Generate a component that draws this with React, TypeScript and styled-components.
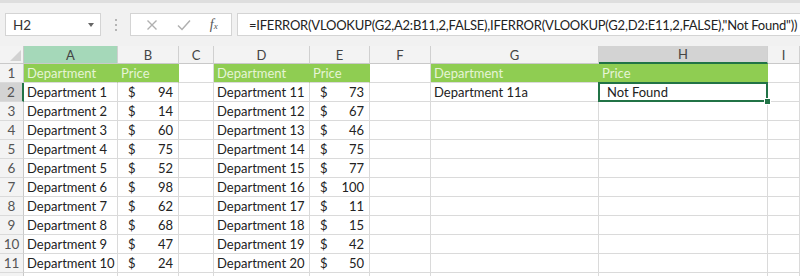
import React from 'react';
import styled, {createGlobalStyle} from 'styled-components';

const GlobalStyle = createGlobalStyle`
  html, body {
    margin: 0;
    padding: 0;
    background: #ffffff;
    font-family: Lato, "Open Sans", sans-serif;
    overflow: hidden;
  }
`;

const Window = styled.div`
  display: flex;
  flex-direction: column;
  width: 800px;
  height: 276px;
  overflow: hidden;
`;

const FormulaBar = styled.div`
  flex-shrink: 0;
  display: flex;
  align-items: center;
  height: 43px;
  padding-left: 5px;
  border-top: 3px solid #dedede;
  background: #f1f1f1;
`;

const NameBox = styled.div`
  display: flex;
  align-items: center;
  justify-content: space-between;
  box-sizing: border-box;
  width: 96px;
  height: 23px;
  padding: 0 6px 0 7px;
  background: #fff;
  border: 1px solid #d4d4d4;
  font-size: 13.5px;
  color: #333;
`;

const Caret = styled.span`
  width: 0;
  height: 0;
  border-left: 3.5px solid transparent;
  border-right: 3.5px solid transparent;
  border-top: 4px solid #666;
`;

const Grip = styled.div`
  display: flex;
  flex-direction: column;
  align-items: center;
  justify-content: center;
  gap: 3px;
  width: 29px;
  & span {
    width: 2px;
    height: 2px;
    background: #b5b5b5;
  }
`;

const FxButtons = styled.div`
  display: flex;
  align-items: center;
  justify-content: space-around;
  box-sizing: border-box;
  width: 102px;
  height: 23px;
  padding: 0 4px 0 6px;
  background: #fff;
  border: 1px solid #d4d4d4;
`;

const FxLabel = styled.span`
  font-family: "Liberation Serif", serif;
  font-style: italic;
  font-size: 14px;
  color: #555;
  & sub {
    font-size: 9px;
    vertical-align: 0;
  }
`;

const FormulaInput = styled.div`
  flex: 1;
  box-sizing: border-box;
  height: 23px;
  margin-left: 5px;
  padding-left: 11px;
  display: flex;
  align-items: center;
  background: #fff;
  border: 1px solid #d4d4d4;
  border-right: none;
  font-size: 13px;
  letter-spacing: -0.22px;
  color: #222;
  white-space: nowrap;
  overflow: hidden;
`;

const Sheet = styled.div`
  flex-shrink: 0;
  display: grid;
  grid-template-columns: 24px 94px 61px 35px 96px 60px 61px 168px 169px 1fr;
  grid-template-rows: 18px repeat(12, 19px);
  font-size: 13px;
  color: #222;
`;

type HeadProps = {
    $state?: 'hover' | 'active';
}

const Corner = styled.div`
  position: relative;
  background: #f3f3f3;
  border-right: 1px solid #c9c9c9;
  border-bottom: 1px solid #c9c9c9;
  &::after {
    content: '';
    position: absolute;
    right: 2px;
    bottom: 2px;
    border-left: 11px solid transparent;
    border-bottom: 11px solid #d2d2d2;
  }
`;

const ColHead = styled.div<HeadProps>`
  display: flex;
  align-items: center;
  justify-content: center;
  box-sizing: border-box;
  font-size: 13px;
  color: #444;
  background: ${p => p.$state === 'hover' ? '#a5d8b9' : p.$state === 'active' ? '#d3d3d3' : '#f3f3f3'};
  border-right: 1px solid #d0d0d0;
  border-bottom: ${p => p.$state === 'active' ? '2px solid #217346' : '1px solid #c9c9c9'};
`;

const RowHead = styled.div<HeadProps>`
  display: flex;
  align-items: flex-end;
  justify-content: center;
  box-sizing: border-box;
  padding-bottom: 1px;
  font-size: 13.5px;
  color: #555;
  background: ${p => p.$state === 'active' ? '#d3d3d3' : '#f3f3f3'};
  border-right: ${p => p.$state === 'active' ? '2px solid #217346' : '1px solid #c9c9c9'};
  border-bottom: 1px solid #dadada;
`;

type CellProps = {
    $head?: boolean;
    $money?: boolean;
    $selected?: boolean;
}

const Cell = styled.div<CellProps>`
  position: relative;
  display: flex;
  align-items: flex-end;
  justify-content: ${p => p.$money ? 'space-between' : 'flex-start'};
  box-sizing: border-box;
  padding: ${p => p.$money ? '0 5px 1px 10px' : p.$selected ? '0 0 1px 8px' : '0 0 1px 3px'};
  white-space: nowrap;
  background: ${p => p.$head ? '#8fcd52' : '#fff'};
  color: ${p => p.$head ? '#e6f4d6' : '#222'};
  border-right: 1px solid ${p => p.$head ? '#8fcd52' : '#dadada'};
  border-bottom: 1px solid #dadada;
  ${p => p.$selected && `
    &::after {
      content: '';
      position: absolute;
      inset: -1px -1px -1px -1px;
      border: 2px solid #217346;
      pointer-events: none;
    }
    &::before {
      content: '';
      position: absolute;
      right: -4px;
      bottom: -4px;
      width: 5px;
      height: 5px;
      background: #217346;
      border: 1px solid #fff;
      z-index: 2;
    }
  `}
`;

const columns: {name: string; state?: 'hover' | 'active'}[] = [
    {name: 'A', state: 'hover'}, {name: 'B'}, {name: 'C'}, {name: 'D'}, {name: 'E'},
    {name: 'F'}, {name: 'G'}, {name: 'H', state: 'active'}, {name: 'I'},
];

const first = [94, 14, 60, 75, 52, 98, 62, 68, 47, 24];
const second = [73, 67, 46, 75, 77, 100, 11, 15, 42, 50];

const formula = '=IFERROR(VLOOKUP(G2,A2:B11,2,FALSE),IFERROR(VLOOKUP(G2,D2:E11,2,FALSE),"Not Found"))';

const Money: React.FC<{value: number}> = ({value}) => (
    <Cell $money><span>$</span><span>{value}</span></Cell>
);

const App: React.FC = () => {
    const renderRow = (i: number) => {
        const row = i + 1;
        if (row === 1) {
            return (
                <React.Fragment key={row}>
                    <RowHead>1</RowHead>
                    <Cell $head>Department</Cell>
                    <Cell $head>Price</Cell>
                    <Cell/>
                    <Cell $head>Department</Cell>
                    <Cell $head>Price</Cell>
                    <Cell/>
                    <Cell $head>Department</Cell>
                    <Cell $head>Price</Cell>
                    <Cell/>
                </React.Fragment>
            );
        }
        const k = row - 2;
        const inTable = k < 10;
        // row 12 only peeks in at the bottom edge, its number is below the fold
        return (
            <React.Fragment key={row}>
                <RowHead $state={row === 2 ? 'active' : undefined}>{row < 12 ? row : ''}</RowHead>
                {inTable ? <Cell>Department {k + 1}</Cell> : <Cell/>}
                {inTable ? <Money value={first[k]}/> : <Cell/>}
                <Cell/>
                {inTable ? <Cell>Department {k + 11}</Cell> : <Cell/>}
                {inTable ? <Money value={second[k]}/> : <Cell/>}
                <Cell/>
                <Cell>{row === 2 ? 'Department 11a' : ''}</Cell>
                {row === 2 ? <Cell $selected>Not Found</Cell> : <Cell/>}
                <Cell/>
            </React.Fragment>
        );
    };

    return (
        <Window>
            <GlobalStyle/>
            <FormulaBar>
                <NameBox>H2<Caret/></NameBox>
                <Grip><span/><span/><span/></Grip>
                <FxButtons>
                    <svg width="12" height="12" viewBox="0 0 12 12">
                        <path d="M1.5 1.5 L10.5 10.5 M10.5 1.5 L1.5 10.5" stroke="#b0b0b0" strokeWidth="1.4"/>
                    </svg>
                    <svg width="14" height="12" viewBox="0 0 14 12">
                        <path d="M1 6.5 L5 10.5 L13 1.5" stroke="#b0b0b0" strokeWidth="1.5" fill="none"/>
                    </svg>
                    <FxLabel>f<sub>x</sub></FxLabel>
                </FxButtons>
                <FormulaInput>{formula}</FormulaInput>
            </FormulaBar>
            <Sheet>
                <Corner/>
                {columns.map(c => <ColHead key={c.name} $state={c.state}>{c.name}</ColHead>)}
                {Array.from({length: 12}, (_, i) => renderRow(i))}
            </Sheet>
        </Window>
    );
};

export default App;
